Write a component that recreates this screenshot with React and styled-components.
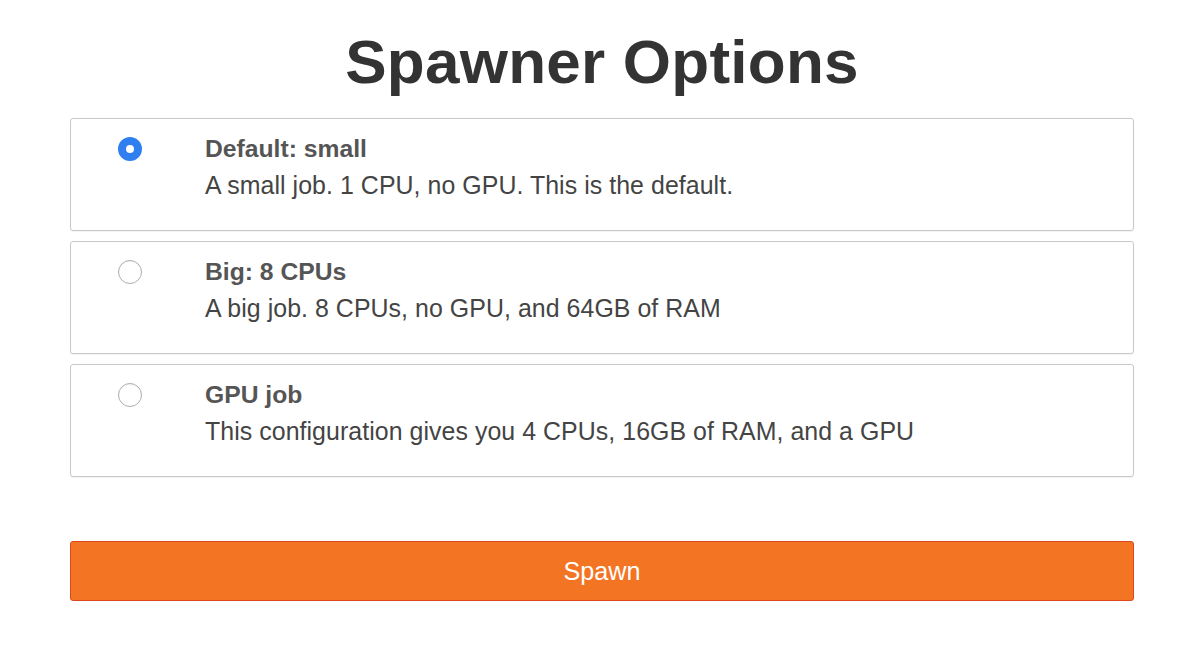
import React, { useState } from "react";
import styled, { createGlobalStyle } from "styled-components";

const Global = createGlobalStyle`
  html, body { margin: 0; padding: 0; background: #fff; }
  body { font-family: "Liberation Sans", Arial, sans-serif; }
`;

const Page = styled.div`
  width: 1064px;
  margin: 0 0 0 70px;
  padding-top: 28px;
  display: flex;
  flex-direction: column;
`;

const Title = styled.h1`
  margin: 0 0 22px;
  font-size: 62px;
  letter-spacing: 0.25px;
  line-height: 1.1;
  font-weight: 700;
  color: #333;
  text-align: center;
`;

const Options = styled.div`
  display: flex;
  flex-direction: column;
  gap: 10px;
`;

const Card = styled.label`
  box-sizing: border-box;
  height: 113px;
  border: 1px solid #c8c8c8;
  border-radius: 3px;
  box-shadow: 0 1px 1px rgba(0, 0, 0, 0.05);
  display: grid;
  grid-template-columns: 134px 1fr;
  padding: 15px 0 0 0;
  cursor: pointer;
`;

const RadioCell = styled.div`
  display: flex;
  justify-content: flex-end;
  padding-right: 63px;
  padding-top: 3px;
`;

const Radio = styled.span`
  box-sizing: border-box;
  width: 24px;
  height: 24px;
  border-radius: 50%;
  border: ${(p) => (p.$checked ? "8px solid #2f7ff0" : "1px solid #adadad")};
  background: #fff;
  box-shadow: ${(p) => (p.$checked ? "none" : "inset 0 1px 1px rgba(0,0,0,0.05)")};
`;

const Text = styled.div`
  display: flex;
  flex-direction: column;
`;

const OptTitle = styled.div`
  font-size: 24.7px;
  line-height: 29px;
  font-weight: 700;
  color: #555;
`;

const OptDesc = styled.div`
  font-size: 24.9px;
  letter-spacing: 0.06px;
  line-height: 29px;
  margin-top: 8px;
  color: #444;
`;

const Button = styled.button`
  margin-top: 64px;
  height: 60px;
  width: 100%;
  box-sizing: border-box;
  background: #f37524;
  border: 1px solid #e0461d;
  border-radius: 3px;
  color: #fff;
  font-family: "Liberation Sans", Arial, sans-serif;
  font-size: 25.2px;
  cursor: pointer;
`;

const options = [
  { title: "Default: small", desc: "A small job. 1 CPU, no GPU. This is the default." },
  { title: "Big: 8 CPUs", desc: "A big job. 8 CPUs, no GPU, and 64GB of RAM" },
  { title: "GPU job", desc: "This configuration gives you 4 CPUs, 16GB of RAM, and a GPU" },
];

export default function App() {
  const [sel, setSel] = useState(0);
  return (
    <>
      <Global />
      <Page>
        <Title>Spawner Options</Title>
        <Options>
          {options.map((o, i) => (
            <Card key={o.title} onClick={() => setSel(i)}>
              <RadioCell>
                <Radio $checked={sel === i} />
              </RadioCell>
              <Text>
                <OptTitle>{o.title}</OptTitle>
                <OptDesc>{o.desc}</OptDesc>
              </Text>
            </Card>
          ))}
        </Options>
        <Button>Spawn</Button>
      </Page>
    </>
  );
}
